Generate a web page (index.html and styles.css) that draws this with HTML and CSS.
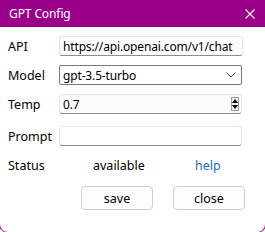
FILE: index.html
```html
<!DOCTYPE html>
<html lang="en">
<head>
    <meta charset="UTF-8">
    <title>GPT Config</title>
    <link rel="stylesheet" href="styles.css">
</head>
<body>
    <div class="window">
        <div class="titlebar">
            <span class="title">GPT Config</span>
            <svg class="close-x" width="10" height="10" viewBox="0 0 10 10">
                <path d="M0.5 0.5 L9.5 9.5 M9.5 0.5 L0.5 9.5" stroke="#fff" stroke-width="1.1"/>
            </svg>
        </div>
        <div class="form">
            <div class="row">
                <label>API</label>
                <div class="field">https://api.openai.com/v1/chat</div>
            </div>
            <div class="row">
                <label>Model</label>
                <div class="field select">
                    <span>gpt-3.5-turbo</span>
                    <svg width="10" height="6" viewBox="0 0 10 6">
                        <path d="M0.5 0.5 L5 5 L9.5 0.5" fill="none" stroke="#606060" stroke-width="1"/>
                    </svg>
                </div>
            </div>
            <div class="row">
                <label>Temp</label>
                <div class="field spin">
                    <span>0.7</span>
                    <div class="spinner">
                        <div class="arrow up"></div>
                        <div class="arrow down"></div>
                    </div>
                </div>
            </div>
            <div class="row prompt-row">
                <label>Prompt</label>
                <div class="field"></div>
            </div>
            <div class="status-row">
                <span class="status-label">Status</span>
                <span class="status-value">available</span>
                <a href="#" class="help">help</a>
            </div>
            <div class="buttons">
                <button class="btn">save</button>
                <button class="btn">close</button>
            </div>
        </div>
    </div>
</body>
</html>
```

FILE: styles.css
```css
body, html {
    margin: 0;
    padding: 0;
    background: #ffffff;
    font-family: "Noto Sans", "Open Sans", sans-serif;
    overflow: hidden;
}
.window {
    width: 265px;
    height: 232px;
    background: #ffffff;
    position: relative;
    overflow: hidden;
}
.window::after {
    content: '';
    position: absolute;
    left: -1px;
    right: -1px;
    bottom: -1px;
    height: 40px;
    border: 1px solid #a0319a;
    border-top: none;
    border-radius: 0 0 9px 9px;
    pointer-events: none;
}
.titlebar {
    height: 27px;
    background: #990087;
    color: #ffffff;
    display: flex;
    align-items: center;
    justify-content: space-between;
    padding: 0 10px 0 9px;
}
.title {
    font-size: 12px;
    letter-spacing: -0.1px;
}
.close-x {
    display: block;
}
.form {
    padding: 9px 22px 0 8px;
    font-size: 12.5px;
    color: #000000;
}
.row {
    display: flex;
    align-items: center;
    height: 20px;
    margin-bottom: 9px;
}
.row label {
    width: 51px;
}
.field {
    flex: 1;
    height: 20px;
    box-sizing: border-box;
    border: 1px solid #e5e5e5;
    border-bottom-color: #8d8d8d;
    border-radius: 3px;
    padding: 0 0 0 3px;
    display: flex;
    align-items: center;
    white-space: nowrap;
    overflow: hidden;
    font-size: 12px;
    letter-spacing: -0.15px;
}
.select {
    border: 1px solid #7a7a7a;
    border-radius: 2px;
    justify-content: space-between;
    padding-right: 5px;
    margin-right: 1px;
}
.spin {
    background: #fbfbfb;
    justify-content: space-between;
    padding-right: 2px;
    margin-right: 1px;
}
.spinner {
    width: 8px;
    height: 14px;
    border: 1px solid #9a9a9a;
    box-sizing: border-box;
    display: flex;
    flex-direction: column;
    align-items: center;
    justify-content: space-around;
    background: #f0f0f0;
}
.arrow {
    width: 0;
    height: 0;
    border-left: 3px solid transparent;
    border-right: 3px solid transparent;
}
.arrow.up {
    border-bottom: 4px solid #000;
}
.arrow.down {
    border-top: 4px solid #000;
}
.prompt-row {
    margin-top: 12px;
}
.prompt-row .field {
    margin-right: 1px;
}
.status-row {
    display: flex;
    align-items: center;
    height: 20px;
    margin-top: 5px;
}
.status-label {
    width: 85px;
}
.status-value {
    width: 102px;
}
.help {
    color: #1c6fc4;
    text-decoration: none;
}
.buttons {
    display: flex;
    justify-content: flex-end;
    gap: 20px;
    margin-top: 11px;
    margin-right: -2px;
}
.btn {
    width: 72px;
    height: 24px;
    background: #fdfdfd;
    border: 1px solid #d0d0d0;
    border-radius: 4px;
    font-family: "Noto Sans", "Open Sans", sans-serif;
    font-size: 12.5px;
    color: #000;
    padding: 0;
}
```
